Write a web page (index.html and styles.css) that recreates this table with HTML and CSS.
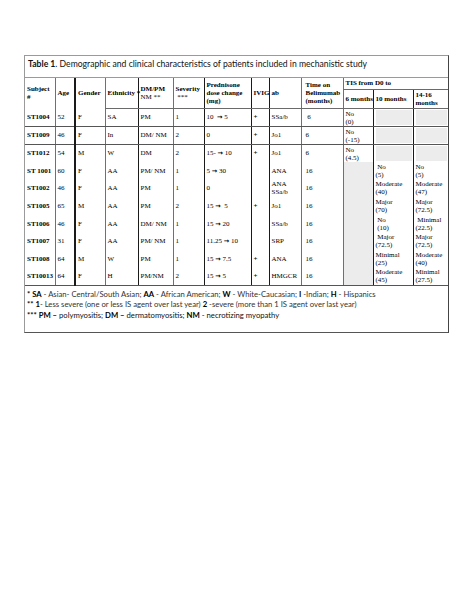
FILE: index.html
```html
<!DOCTYPE html>
<html>
<head>
<meta charset="utf-8">
<title>Table 1</title>
<link rel="stylesheet" href="styles.css">
</head>
<body>
<div class="page">
  <div class="frame">
    <div class="title"><b>Table 1</b>. Demographic and clinical characteristics of patients included in mechanistic study</div>
    <table class="grid">
      <colgroup>
        <col class="c-subj"><col class="c-age dark"><col class="c-gen"><col class="c-eth dark"><col class="c-dm"><col class="c-sev dark"><col class="c-pred dark"><col class="c-ivig dark"><col class="c-ab"><col class="c-time"><col class="c-m6 dark"><col class="c-m10 dark"><col class="c-m14">
      </colgroup>
      <thead>
        <tr class="ha">
          <th rowspan="2">Subject<br>#</th>
          <th rowspan="2">Age</th>
          <th rowspan="2">Gender</th>
          <th rowspan="2" class="hl">Ethnicity *</th>
          <th rowspan="2" class="hl">DM/PM<br><span class="nb">NM **</span></th>
          <th rowspan="2" class="hl">Severity<br><span class="nb">&nbsp;***</span></th>
          <th rowspan="2" class="hl">Prednisone<br>dose change<br>(mg)</th>
          <th rowspan="2" class="hl">IVIG</th>
          <th rowspan="2" class="hl">ab</th>
          <th rowspan="2" class="hl time">Time on<br>Belimumab<br>(months)</th>
          <th colspan="3" class="hl">TIS from D0 to</th>
        </tr>
        <tr class="hb">
          <th class="hl">6 months</th>
          <th class="hl">10 months</th>
          <th class="hl">14-16<br>months</th>
        </tr>
      </thead>
      <tbody>
        <tr class="r18 line">
          <td class="sid">ST1004</td><td>52</td><td>F</td><td>SA</td><td>PM</td><td>1</td><td>10 &nbsp;<span class="ar">→</span> 5</td><td class="plus">+</td><td>SSa/b</td><td class="time">&nbsp;6</td>
          <td class="top">No<br>(0)</td><td class="sw"><div class="swatch"></div></td><td class="sw"><div class="swatch"></div></td>
        </tr>
        <tr class="r18 line">
          <td class="sid">ST1009</td><td>46</td><td>F</td><td>In</td><td>DM/ NM</td><td>2</td><td>0</td><td class="plus">+</td><td>Jo1</td><td class="time">6</td>
          <td class="top">No<br>(-15)</td><td class="sw"><div class="swatch"></div></td><td class="sw"><div class="swatch"></div></td>
        </tr>
        <tr class="r18">
          <td class="sid">ST1012</td><td>54</td><td>M</td><td>W</td><td>DM</td><td>2</td><td>15- <span class="ar">→</span> 10</td><td class="plus">+</td><td>Jo1</td><td class="time">6</td>
          <td class="top">No<br>(4.5)</td><td class="sw"><div class="swatch"></div></td><td class="sw"><div class="swatch"></div></td>
        </tr>
        <tr class="r17">
          <td class="sid">ST 1001</td><td>60</td><td>F</td><td>AA</td><td>PM/ NM</td><td>1</td><td>5 <span class="ar">→</span> 30</td><td></td><td>ANA</td><td class="time">16</td>
          <td class="shade"></td><td>&nbsp;No<br>(5)</td><td>No<br>(5)</td>
        </tr>
        <tr class="r17">
          <td class="sid">ST1002</td><td>46</td><td>F</td><td>AA</td><td>PM</td><td>1</td><td>0</td><td></td><td>ANA<br>SSa/b</td><td class="time">16</td>
          <td class="shade"></td><td>Moderate<br>(40)</td><td>Moderate<br>(47)</td>
        </tr>
        <tr class="r17">
          <td class="sid">ST1005</td><td>65</td><td>M</td><td>AA</td><td>PM</td><td>2</td><td>15 <span class="ar">→</span> &nbsp;5</td><td class="plus">+</td><td>Jo1</td><td class="time">16</td>
          <td class="shade"></td><td>Major<br>(70)</td><td>Major<br>(72.5)</td>
        </tr>
        <tr class="r17">
          <td class="sid">ST1006</td><td>46</td><td>F</td><td>AA</td><td>DM/ NM</td><td>1</td><td>15 <span class="ar">→</span> 20</td><td></td><td>SSa/b</td><td class="time">16</td>
          <td class="shade"></td><td>&nbsp;No<br>&nbsp;(10)</td><td>&nbsp;Minimal<br>(22.5)</td>
        </tr>
        <tr class="r17">
          <td class="sid">ST1007</td><td>31</td><td>F</td><td>AA</td><td>PM/ NM</td><td>1</td><td>11.25 <span class="ar">→</span> 10</td><td></td><td>SRP</td><td class="time">16</td>
          <td class="shade"></td><td>&nbsp;Major<br>(72.5)</td><td>Major<br>(72.5)</td>
        </tr>
        <tr class="r17">
          <td class="sid">ST1008</td><td>64</td><td>M</td><td>W</td><td>PM</td><td>1</td><td>15 <span class="ar">→</span> 7.5</td><td class="plus">+</td><td>ANA</td><td class="time">16</td>
          <td class="shade"></td><td>Minimal<br>(25)</td><td>Moderate<br>(40)</td>
        </tr>
        <tr class="r17 line">
          <td class="sid">ST10013</td><td>64</td><td>F</td><td>H</td><td>PM/NM</td><td>2</td><td>15 <span class="ar">→</span> 5</td><td class="plus">+</td><td>HMGCR</td><td class="time">16</td>
          <td class="shade"></td><td>Moderate<br>(45)</td><td>Minimal<br>(27.5)</td>
        </tr>
      </tbody>
    </table>
    <div class="notes">
      <p><b>* SA</b> - Asian- Central/South Asian; <b>AA</b> - African American; <b>W</b> - White-Caucasian; <b>I</b> -Indian; <b>H</b> - Hispanics</p>
      <p><b>** 1</b>- Less severe (one or less IS agent over last year) <b>2</b> -severe (more than 1 IS agent over last year)</p>
      <p class="dark-note"><b>*** PM –</b> polymyositis; <b>DM –</b> dermatomyositis; <b>NM</b> - necrotizing myopathy</p>
    </div>
  </div>
</div>
</body>
</html>
```

FILE: styles.css
```css
html, body {
  margin: 0;
  padding: 0;
  background: #ffffff;
}

.page {
  padding: 55px 0 0 24px;
}

.frame {
  width: 425px;
  height: 278px;
  box-sizing: border-box;
  border: 1px solid #9a9a9a;
  border-right-color: #444444;
  border-bottom-color: #555555;
}

.title {
  height: 21px;
  border-bottom: 1px solid #9a9a9a;
  padding-left: 3px;
  font-family: Lato, "Liberation Sans", sans-serif;
  font-size: 8.65px;
  line-height: 15px;
  color: #111111;
  white-space: nowrap;
}

.grid {
  width: 423px;
  table-layout: fixed;
  border-collapse: collapse;
  font-family: "Liberation Serif", "Times New Roman", serif;
  font-size: 7px;
  line-height: 8px;
  color: #000000;
}

.grid col {
  border-right: 1px solid #707070;
}

.grid col.dark {
  border-right-color: #1a1a1a;
}

.grid col.c-age {
  border-right-width: 2px;
}

.grid col.c-m14 {
  border-right: none;
}

.c-subj { width: 30px; }
.c-age { width: 20px; }
.c-gen { width: 30px; }
.c-eth { width: 33px; }
.c-dm { width: 35px; }
.c-sev { width: 31px; }
.c-pred { width: 47px; }
.c-ivig { width: 18px; }
.c-ab { width: 32px; }
.c-time { width: 42px; }
.c-m6 { width: 30px; }
.c-m10 { width: 40px; }
.c-m14 { width: 35px; }

.grid th,
.grid td {
  padding: 0 0 0 2px;
  text-align: left;
  vertical-align: middle;
  white-space: nowrap;
  overflow: visible;
}

.grid th {
  font-weight: bold;
}

.grid th .nb {
  font-weight: normal;
}

.grid th.hl {
  border-bottom: 1px solid #6a6a6a;
}

.grid th.time,
.grid td.time {
  padding-left: 4px;
}

.ha { height: 11px; }
.hb { height: 19px; }
.r18 { height: 18px; }
.r17 { height: 17.6px; }

.grid tr.line {
  border-bottom: 1px solid #555555;
}

.grid td.sid {
  font-weight: bold;
}

.grid td.top {
  vertical-align: top;
  padding-top: 1px;
}

.grid td.sw {
  padding: 1px 1px 1px 2px;
}

.swatch {
  height: 15px;
  background: #ececec;
}

.grid td.shade {
  background: #ececec;
  padding: 0;
}

.ar {
  font-family: "DejaVu Sans", sans-serif;
  font-weight: bold;
  font-size: 6.5px;
}

.plus {
  font-weight: bold;
}

.notes {
  padding: 3px 0 0 2px;
  font-family: Lato, "Liberation Sans", sans-serif;
  font-size: 7.7px;
  line-height: 10.5px;
  color: #333333;
  white-space: nowrap;
}

.notes p {
  margin: 0;
}

.notes b {
  color: #000000;
}

.notes .dark-note {
  color: #111111;
}
```
